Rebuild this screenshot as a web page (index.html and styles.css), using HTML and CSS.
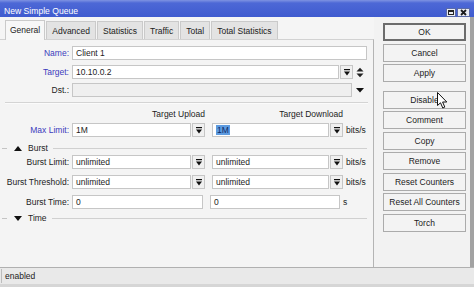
FILE: index.html
```html
<!DOCTYPE html>
<html>
<head>
<meta charset="utf-8">
<title>New Simple Queue</title>
<link rel="stylesheet" href="styles.css">
</head>
<body>
<div class="win">
  <div class="titlebar">
    <span class="title">New Simple Queue</span>
    <div class="tbtns">
      <span class="tb tb-max"><span class="maxicon"></span></span>
      <span class="tb tb-close"><svg width="7" height="7" viewBox="0 0 7 7"><path d="M1 1L6 6M6 1L1 6" stroke="#1a1a1a" stroke-width="1.8"/></svg></span>
    </div>
  </div>
  <div class="main">
    <div class="left">
      <div class="tabs">
        <div class="tab active">General</div>
        <div class="tab">Advanced</div>
        <div class="tab">Statistics</div>
        <div class="tab">Traffic</div>
        <div class="tab">Total</div>
        <div class="tab">Total Statistics</div>
      </div>
      <div class="panel">
        <div class="row r-name">
          <span class="lbl blue">Name:</span>
          <div class="field w-name">Client 1</div>
        </div>
        <div class="row r-target">
          <span class="lbl blue">Target:</span>
          <div class="field w-target">10.10.0.2</div>
          <span class="dd"><svg width="6" height="7" viewBox="0 0 6 7"><rect x="0" y="0" width="6" height="1.2" fill="#111"/><path d="M0 2.4H6L3 6.6Z" fill="#111"/></svg></span>
          <svg class="updown" width="8" height="11" viewBox="0 0 8 11"><path d="M0.5 4.5H7.5L4 0.8Z" fill="#222"/><path d="M0.5 6.5H7.5L4 10.2Z" fill="#222"/></svg>
        </div>
        <div class="row r-dst">
          <span class="lbl">Dst.:</span>
          <div class="field disabled w-dst"></div>
          <svg class="down" width="8" height="5" viewBox="0 0 8 5"><path d="M0 0H8L4 4.5Z" fill="#111"/></svg>
        </div>
        <div class="sep"></div>
        <div class="row r-head">
          <span class="lbl"></span>
          <span class="head h1">Target Upload</span>
          <span class="head h2">Target Download</span>
        </div>
        <div class="row r-max">
          <span class="lbl blue">Max Limit:</span>
          <div class="field w-a">1M</div>
          <span class="dd"><svg width="6" height="7" viewBox="0 0 6 7"><rect x="0" y="0" width="6" height="1.2" fill="#111"/><path d="M0 2.4H6L3 6.6Z" fill="#111"/></svg></span>
          <div class="field w-b gap"><span class="sel">1M</span></div>
          <span class="dd"><svg width="6" height="7" viewBox="0 0 6 7"><rect x="0" y="0" width="6" height="1.2" fill="#111"/><path d="M0 2.4H6L3 6.6Z" fill="#111"/></svg></span>
          <span class="unit">bits/s</span>
        </div>
        <div class="sect s-burst">
          <svg class="tri" width="8" height="5" viewBox="0 0 8 5"><path d="M0 5H8L4 0Z" fill="#111"/></svg>
          <span>Burst</span>
        </div>
        <div class="row r-bl">
          <span class="lbl">Burst Limit:</span>
          <div class="field w-a">unlimited</div>
          <span class="dd"><svg width="6" height="7" viewBox="0 0 6 7"><rect x="0" y="0" width="6" height="1.2" fill="#111"/><path d="M0 2.4H6L3 6.6Z" fill="#111"/></svg></span>
          <div class="field w-b gap">unlimited</div>
          <span class="dd"><svg width="6" height="7" viewBox="0 0 6 7"><rect x="0" y="0" width="6" height="1.2" fill="#111"/><path d="M0 2.4H6L3 6.6Z" fill="#111"/></svg></span>
          <span class="unit">bits/s</span>
        </div>
        <div class="row r-bt">
          <span class="lbl">Burst Threshold:</span>
          <div class="field w-a">unlimited</div>
          <span class="dd"><svg width="6" height="7" viewBox="0 0 6 7"><rect x="0" y="0" width="6" height="1.2" fill="#111"/><path d="M0 2.4H6L3 6.6Z" fill="#111"/></svg></span>
          <div class="field w-b gap">unlimited</div>
          <span class="dd"><svg width="6" height="7" viewBox="0 0 6 7"><rect x="0" y="0" width="6" height="1.2" fill="#111"/><path d="M0 2.4H6L3 6.6Z" fill="#111"/></svg></span>
          <span class="unit">bits/s</span>
        </div>
        <div class="row r-btime">
          <span class="lbl">Burst Time:</span>
          <div class="field w-c">0</div>
          <div class="field w-d gap">0</div>
          <span class="unit">s</span>
        </div>
        <div class="sect s-time">
          <svg class="tri" width="8" height="5" viewBox="0 0 8 5"><path d="M0 0H8L4 5Z" fill="#111"/></svg>
          <span>Time</span>
        </div>
      </div>
    </div>
    <div class="right">
      <button class="btn default">OK</button>
      <button class="btn">Cancel</button>
      <button class="btn">Apply</button>
      <button class="btn group">Disable</button>
      <button class="btn">Comment</button>
      <button class="btn">Copy</button>
      <button class="btn">Remove</button>
      <button class="btn">Reset Counters</button>
      <button class="btn">Reset All Counters</button>
      <button class="btn">Torch</button>
      <svg class="cursor" width="11" height="17" viewBox="0 0 11 17"><path d="M0.5 0.5V13.5L3.5 10.8L5.8 16L7.8 15.1L5.6 10H9.8Z" fill="#fff" stroke="#111" stroke-width="1" stroke-linejoin="round"/></svg>
    </div>
  </div>
  <div class="status"><span class="stxt">enabled</span></div>
</div>
</body>
</html>
```
FILE: styles.css
```css
* { box-sizing: border-box; margin: 0; padding: 0; }
html, body { width: 474px; height: 287px; overflow: hidden; }
body {
  font-family: "Liberation Sans", Arial, sans-serif;
  font-size: 8.5px;
  color: #1c1c1c;
  background: #f0f0f0;
}
.win { width: 474px; height: 287px; display: flex; flex-direction: column; background: #f2f2f2; }

/* title bar */
.titlebar {
  height: 17px;
  flex: none;
  display: flex;
  align-items: flex-start;
  background: linear-gradient(#7f93e2 0, #4d68d6 3px, #3f5bcf 100%);
  color: #fff;
  padding-left: 4px;
}
.title { line-height: 11px; padding-top: 6px; font-size: 8.6px; }
.tbtns { margin-left: auto; margin-right: 4px; margin-top: 8px; display: flex; gap: 1px; }
.tb {
  height: 9px;
  background: #e9ebf2;
  border: 1px solid #5a6aa8;
  display: flex; align-items: center; justify-content: center;
}
.tb-max { width: 10px; }
.tb-close { width: 13px; }
.maxicon { width: 6px; height: 5px; border: 1px solid #222; border-top-width: 2px; }

/* main */
.main { flex: 1; display: flex; border-right: 4px solid #a2a2a2; }
.left { width: 374px; display: flex; flex-direction: column; }
.tabs { height: 22px; display: flex; align-items: flex-end; padding-left: 5px; gap: 1px; background: #f5f5f5; }
.tab {
  height: 18px;
  padding: 0 5px;
  line-height: 18px;
  background: #e3e3e3;
  border: 1px solid #cacaca;
  border-bottom: none;
  color: #222;
}
.tab.active {
  height: 20px;
  line-height: 18px;
  padding: 0 4px;
  background: #f7f7f7;
  margin-bottom: -1px;
  position: relative;
  z-index: 1;
}
.panel {
  flex: 1;
  background: #f4f4f4;
  border-top: 1px solid #d2d2d2;
  border-right: 1px solid #b4b4b4;
  display: flex;
  flex-direction: column;
}

/* rows */
.row { display: flex; align-items: center; height: 14px; flex: none; }
.lbl { width: 71px; flex: none; text-align: right; padding-right: 2px; }
.blue { color: #3b3bbd; }
.field {
  height: 14px;
  background: #fff;
  border: 1px solid #c6c6c6;
  padding-left: 3px;
  line-height: 12px;
  white-space: nowrap;
  overflow: hidden;
}
.field.disabled { background: #efefef; }
.gap { margin-left: 7px; }
.w-name { width: 295px; margin-left: 1px; }
.w-target { width: 267px; margin-left: 1px; }
.w-dst { width: 280px; margin-left: 1px; }
.w-a { width: 119px; margin-left: 1px; }
.w-b { width: 117px; }
.w-c { width: 131px; margin-left: 1px; }
.w-d { width: 130px; }
.dd {
  width: 13px; height: 14px;
  flex: none;
  margin-left: 1px;
  background: #f0f0f0;
  border: 1px solid #c6c6c6;
  display: flex; align-items: center; justify-content: center;
}
.updown { margin-left: 3px; }
.down { margin-left: 4px; }
.unit { margin-left: 3px; }
.sel { background: #5d9be0; color: #0d2a66; padding: 0 1px; }

.r-name { margin-top: 6px; }
.r-target { margin-top: 5px; }
.r-dst { margin-top: 4px; }
.sep { height: 2px; margin: 5px 5px 0 5px; border-top: 1px solid #d4d4d4; border-bottom: 1px solid #fbfbfb; flex: none; }
.r-head { margin-top: 5px; height: 10px; }
.head { text-align: right; white-space: nowrap; }
.h1 { width: 134px; }
.h2 { width: 138px; }
.r-max { margin-top: 4px; }
.sect { display: flex; align-items: center; height: 10px; margin-top: 6px; flex: none; }
.sect::before { content: ""; width: 5px; height: 1px; background: #c4c4c4; margin-left: 2px; }
.sect::after { content: ""; flex: 1; height: 1px; background: #d0d0d0; margin: 0 6px 0 5px; }
.tri { margin: 0 6px 0 7px; }
.r-bl { margin-top: 2px; }
.r-bt { margin-top: 6px; }
.r-btime { margin-top: 6px; }
.s-time { margin-top: 4px; }

/* buttons */
.right { flex: 1; position: relative; padding: 6px 0 0 9px; display: flex; flex-direction: column; gap: 2.5px; }
.btn {
  width: 83px; height: 18px;
  flex: none;
  font: inherit;
  color: #1c1c1c;
  background: #f3f3f3;
  border: 1px solid #ababab;
}
.btn.default { border: 2px solid #6c6c6c; }
.btn.group { margin-top: 6px; }
.cursor { position: absolute; left: 63px; top: 75px; }

/* status */
.status {
  height: 20px;
  flex: none;
  background: #e9e9e9;
  border-top: 1px solid #b0b0b0;
  border-bottom: 3px solid #d6d6d6;
  display: flex;
  align-items: center;
}
.stxt { padding-left: 3px; border-left: 1px solid #bdbdbd; margin-left: 1px; height: 14px; line-height: 14px; }
```
